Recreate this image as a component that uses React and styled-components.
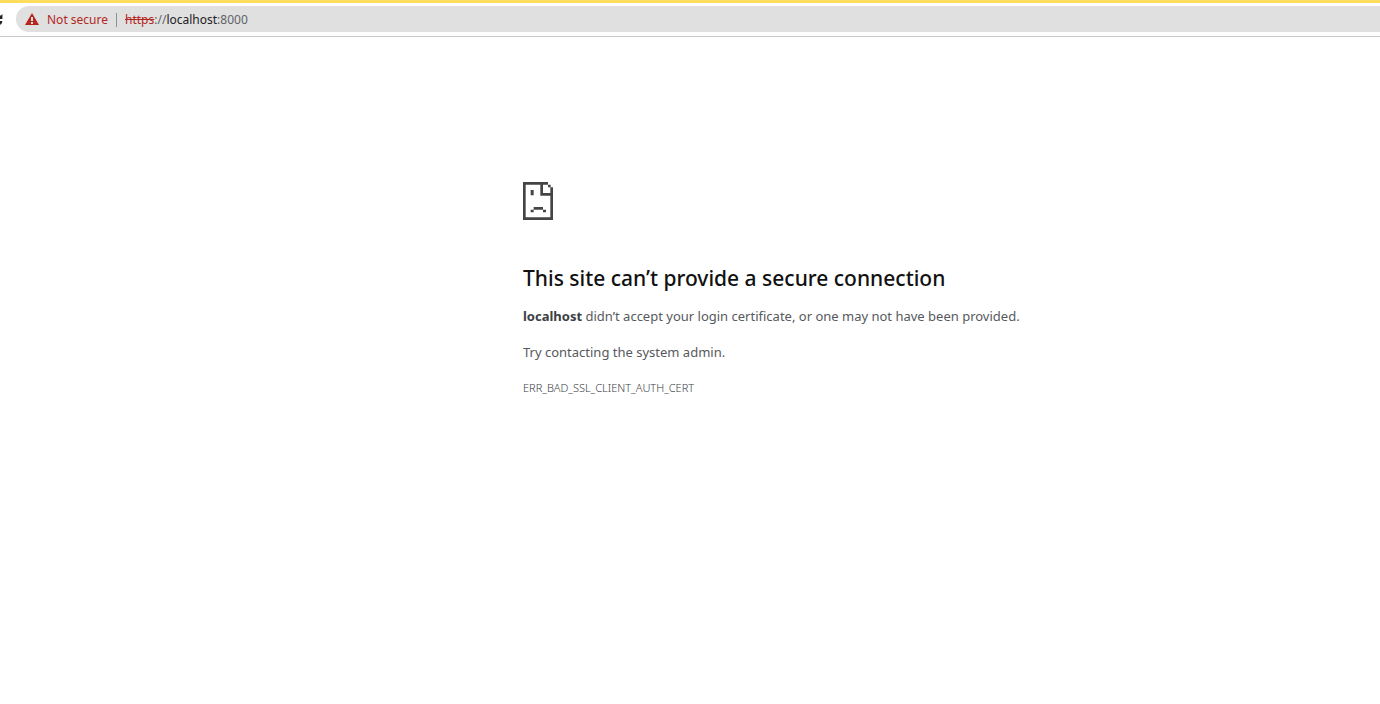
import React from 'react';
import styled, { createGlobalStyle } from 'styled-components';

const GlobalStyle = createGlobalStyle`
  body {
    margin: 0;
    background: #fff;
    font-family: 'Segoe UI', 'Noto Sans', sans-serif;
  }
`;

const Toolbar = styled.header`
  display: flex;
  align-items: center;
  height: 33px;
  border-top: 3px solid #ffdd5c;
  border-bottom: 1px solid #c9c9c9;
`;

const ReloadButton = styled.button`
  display: flex;
  width: 16px;
  padding: 0;
  border: none;
  background: none;
  cursor: pointer;
`;

const AddressBar = styled.div`
  display: flex;
  flex: 1;
  align-items: center;
  box-sizing: border-box;
  height: 26px;
  margin-bottom: 1px;
  padding: 2px 0 0 9px;
  border-radius: 13px 0 0 13px;
  background: #e0e0e0;
  font-size: 12px;
  line-height: 16px;
`;

const SecurityButton = styled.button`
  display: flex;
  align-items: center;
  gap: 8px;
  padding: 0 8px 0 0;
  border: none;
  border-right: 1px solid #8f8f8f;
  background: none;
  color: #b3261e;
  font: inherit;
  line-height: 14px;
  cursor: pointer;
`;

const Address = styled.div`
  flex: 1;
  padding-left: 8px;
  color: #5f6368;
  outline: none;
`;

const Scheme = styled.s`
  color: #b3261e;
`;

const Host = styled.span`
  color: #202124;
`;

const ErrorPage = styled.main`
  max-width: 600px;
  margin: 145px 257px 0 auto;
  color: #56595d;
  font-size: 13px;
  line-height: 20px;
`;

const Title = styled.h1`
  margin: 42px 0 12px;
  color: #111;
  font-size: 21px;
  font-weight: 500;
  line-height: 32px;
`;

const Message = styled.p`
  margin: 0 0 16px;

  strong {
    color: #3c4043;
  }
`;

const ErrorCode = styled.div`
  color: #3c4043;
  font-size: 11px;
  font-weight: 300;
`;

const SadFile = styled.svg`
  display: block;
  width: 30px;
  height: 38px;
  fill: #444;
`;

const ReloadIcon = () => (
  <svg width="4" height="12" viewBox="0 0 4 12" fill="#222" aria-hidden="true">
    <path d="M0 1.5h1L2.4 0v5H0zM0 7h2.2v1.2L1 10.4H0z" />
  </svg>
);

const WarningIcon = () => (
  <svg width="14" height="14" viewBox="0 0 14 14" aria-hidden="true">
    <path d="M7 0l7 12H0z" fill="#b3261e" />
    <path d="M6 4h2v4H6zM6 9h2v2H6z" fill="#e0e0e0" />
  </svg>
);

const SadFileIcon = () => (
  <SadFile viewBox="0 0 90 114" role="img" aria-label="Page error">
    <path d="M0 0H75V8H60V33H90V114H0ZM8 8V106H82V41H52V8Z" fillRule="evenodd" />
    <path d="M75 8h8v8h-8zM82 16h8v20h-8z" />
    <path d="M23 24h9v16h-9zM32 75h28v8H32zM23 83h9v8h-9zM60 83h9v8h-9z" />
  </SadFile>
);

const App = () => (
  <>
    <GlobalStyle />
    <Toolbar>
      <ReloadButton aria-label="Reload">
        <ReloadIcon />
      </ReloadButton>
      <AddressBar>
        <SecurityButton>
          <WarningIcon />
          Not secure
        </SecurityButton>
        <Address
          role="textbox"
          aria-label="Address"
          contentEditable
          suppressContentEditableWarning
          spellCheck={false}
        >
          <Scheme>https</Scheme>://<Host>localhost</Host>:8000
        </Address>
      </AddressBar>
    </Toolbar>
    <ErrorPage>
      <SadFileIcon />
      <Title>This site can’t provide a secure connection</Title>
      <Message>
        <strong>localhost</strong> didn’t accept your login certificate, or one may not have been provided.
      </Message>
      <Message>Try contacting the system admin.</Message>
      <ErrorCode>ERR_BAD_SSL_CLIENT_AUTH_CERT</ErrorCode>
    </ErrorPage>
  </>
);

export default App;
